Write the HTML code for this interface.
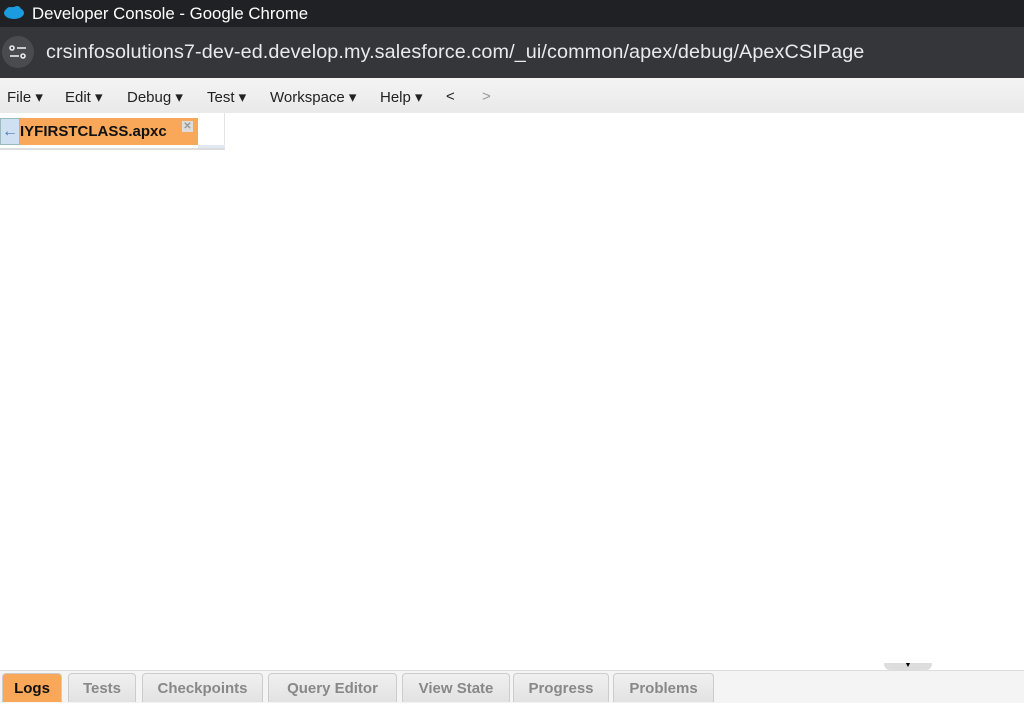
<!DOCTYPE html>
<html><head><style>
body{margin:0;width:1024px;height:702px;overflow:hidden;background:#fff;font-family:"Liberation Sans",sans-serif;position:relative}
.t{position:absolute;left:0;top:0;width:1024px;height:27px;background:#202124;color:#fff;font-size:16.8px}
.a{position:absolute;left:0;top:27px;width:1024px;height:51px;background:#35363a;color:#e8eaed;font-size:19.8px}
.m{position:absolute;left:0;top:78px;width:1024px;height:35px;background:linear-gradient(#f4f4f4,#e9e9e9);font-size:15px;color:#222}
.m span{position:absolute;top:10px}
.bt{position:absolute;top:673px;height:29px;background:linear-gradient(#f0f0f0,#e2e2e2);border:1px solid #ccc;border-bottom:none;border-radius:4px 4px 0 0;color:#888;font-weight:bold;font-size:15px;text-align:center;line-height:30px;box-sizing:border-box}
</style></head><body>
<div class="t"><svg style="position:absolute;left:3px;top:5px" width="22" height="16"><ellipse cx="11" cy="8" rx="10" ry="6" fill="#1b9be0"/><circle cx="7" cy="6" r="4" fill="#1b9be0"/><circle cx="14" cy="5" r="4" fill="#1b9be0"/></svg><span style="position:absolute;left:32px;top:4px">Developer Console - Google Chrome</span></div>
<div class="a"><div style="position:absolute;left:2px;top:9px;width:32px;height:32px;border-radius:50%;background:#4a4b4f"></div>
<svg style="position:absolute;left:9px;top:17px" width="18" height="16" stroke="#e8eaed" stroke-width="1.6" fill="none"><circle cx="3" cy="4" r="2"/><line x1="8" y1="4" x2="17" y2="4"/><line x1="1" y1="12" x2="10" y2="12"/><circle cx="14" cy="12" r="2"/></svg>
<span style="position:absolute;left:46px;top:14px;letter-spacing:0.1px">crsinfosolutions7-dev-ed.develop.my.salesforce.com/_ui/common/apex/debug/ApexCSIPage</span></div>
<div class="m"><span style="left:7px">File ▾</span><span style="left:65px">Edit ▾</span><span style="left:127px">Debug ▾</span><span style="left:207px">Test ▾</span><span style="left:270px">Workspace ▾</span><span style="left:380px">Help ▾</span><span style="left:446px">&lt;</span><span style="left:482px;color:#999">&gt;</span></div>
<div style="position:absolute;left:0;top:113px;width:225px;height:37px;background:#fff;border-bottom:2px solid #ddd;border-right:1px solid #e4e4e4;box-sizing:border-box"></div>
<div style="position:absolute;left:198px;top:145px;width:27px;height:3px;background:#dfe8f3"></div>
<div style="position:absolute;left:0;top:118px;width:20px;height:27px;background:#cfe0f3;border:1px solid #9bb;box-sizing:border-box;color:#4a7ab0;font-size:16px;line-height:25px;text-align:center;font-weight:bold">←</div>
<div style="position:absolute;left:20px;top:118px;width:178px;height:27px;background:#f9a85a;font-weight:bold;font-size:15px;line-height:27px;color:#111">IYFIRSTCLASS.apxc<span style="position:absolute;left:162px;top:3px;width:11px;height:11px;background:#ddd;color:#999;font-size:10px;line-height:11px;text-align:center">✕</span></div>
<div style="position:absolute;left:0;top:670px;width:1024px;height:32px;background:#f4f4f4;border-top:1px solid #ddd"></div>
<div style="position:absolute;left:884px;top:663px;width:48px;height:7px;background:#ddd;border-radius:0 0 6px 6px;text-align:center;font-size:7px;line-height:6px">▼</div>
<div class="bt" style="left:2px;width:60px;background:#f9a85a;color:#111">Logs</div>
<div class="bt" style="left:68px;width:68px">Tests</div>
<div class="bt" style="left:142px;width:121px">Checkpoints</div>
<div class="bt" style="left:268px;width:129px">Query Editor</div>
<div class="bt" style="left:402px;width:108px">View State</div>
<div class="bt" style="left:513px;width:96px">Progress</div>
<div class="bt" style="left:613px;width:101px">Problems</div>
</body></html>
